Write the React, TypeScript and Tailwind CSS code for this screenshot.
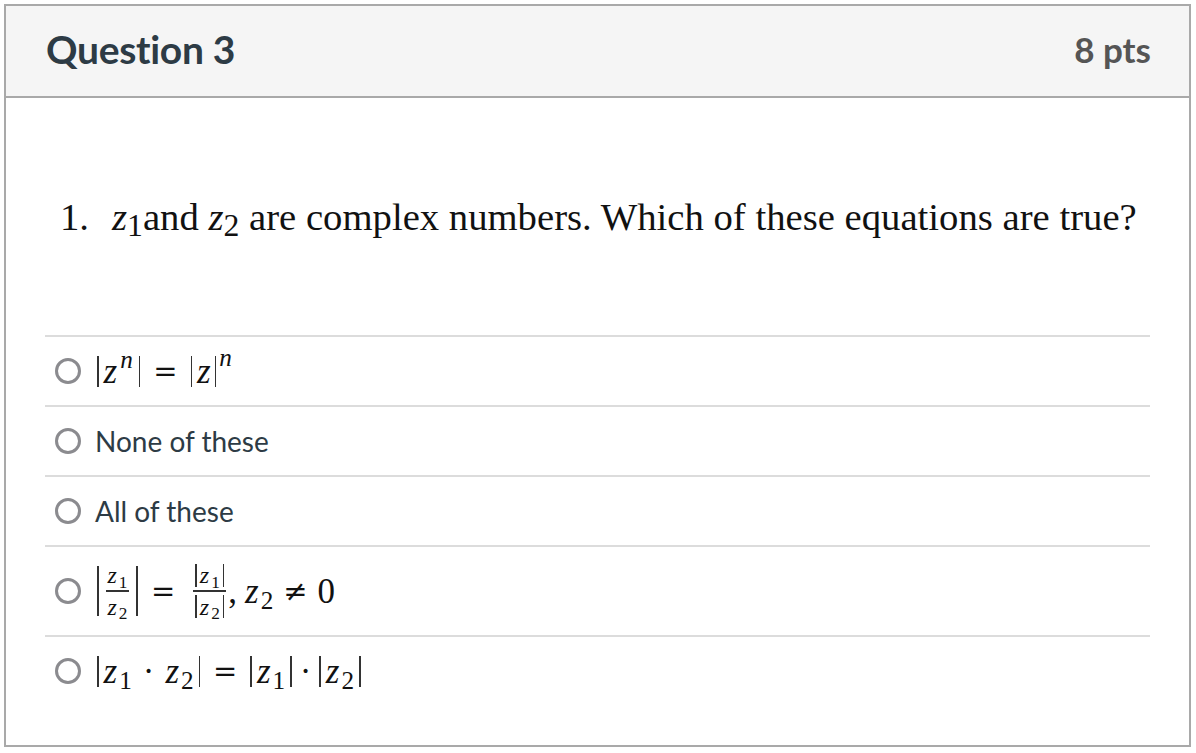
import React from "react";

const serif = { fontFamily: '"Liberation Serif", "Times New Roman", serif' };
const dejavu = { fontFamily: '"DejaVu Serif", serif' };

function Radio() {
  return (
    <span className="inline-block w-[26px] h-[26px] rounded-full border-[3px] border-[#8b8b8f] bg-white shrink-0" />
  );
}

function Bar({ h = "h-[31px]", m = "mx-[3px]" }: { h?: string; m?: string }) {
  return <span className={`inline-block w-[1.5px] bg-[#333] ${h} ${m}`} />;
}

function Z({ sub }: { sub?: string }) {
  return (
    <span className="inline-flex items-baseline">
      <span className="italic">z</span>
      {sub && <span className="text-[0.72em] relative top-[0.25em] ml-[2px]">{sub}</span>}
    </span>
  );
}

function Eq({ c = "=", m = "mx-[13px]" }: { c?: string; m?: string }) {
  return (
    <span className={`${m} text-[29px]`} style={dejavu}>
      {c}
    </span>
  );
}

function Row({ children, tall }: { children: React.ReactNode; tall?: boolean }) {
  return (
    <div className={`flex items-center gap-[14px] pl-[10px] border-t-2 border-[#dcdcdc] ${tall ? "h-[90px]" : "h-[70px]"}`}>
      <Radio />
      <div className="flex items-center">{children}</div>
    </div>
  );
}

function MathText({ children }: { children: React.ReactNode }) {
  return (
    <span className="flex items-center text-[35px] text-[#111] leading-none" style={serif}>
      {children}
    </span>
  );
}

function Frac({ num, den }: { num: React.ReactNode; den: React.ReactNode }) {
  return (
    <span className="inline-flex flex-col items-center mx-[5px]">
      <span className="flex items-center px-[2px]">{num}</span>
      <span className="w-full h-[1.5px] bg-[#333] my-[3px]" />
      <span className="flex items-center px-[2px]">{den}</span>
    </span>
  );
}

export default function App() {
  return (
    <div className="w-[1196px] h-[753px] bg-white pl-[4px] pt-[4px]">
      <div className="w-[1187px] h-[743px] border-2 border-[#a9a9a9] flex flex-col">
        <div className="h-[92px] bg-[#f5f5f5] border-b-2 border-[#a9a9a9] flex items-center justify-between pl-[40px] pr-[38px] pb-[4px]" style={{ fontFamily: 'Lato, "Open Sans", sans-serif' }}>
          <span className="text-[39px] font-bold text-[#2d3b45] tracking-[-0.3px]">Question 3</span>
          <span className="text-[35px] font-bold text-[#555]">8 pts</span>
        </div>
        <div className="px-[39px] flex flex-col">
          <div className="h-[237px] flex items-center pl-[15px] pt-[2px] text-[38.7px] text-[#111]" style={serif}>
            <span className="w-[52px]">1.</span>
            <span>
              <span className="italic">z</span>
              <span className="text-[0.82em] relative top-[0.18em]">1</span>and{" "}
              <span className="italic">z</span>
              <span className="text-[0.82em] relative top-[0.18em]">2</span> are complex numbers. Which of these equations are true?
            </span>
          </div>
          <Row>
            <MathText>
              <Bar m="ml-[2px] mr-[5px]" />
              <span className="italic">z</span>
              <span className="italic text-[0.72em] relative -top-[0.45em] ml-[3px]">n</span>
              <Bar m="ml-[6px] mr-[0px]" />
              <Eq />
              <Bar m="ml-[0px] mr-[5px]" />
              <span className="italic">z</span>
              <Bar m="ml-[4px] mr-[3px]" />
              <span className="italic text-[0.72em] relative -top-[0.55em]">n</span>
            </MathText>
          </Row>
          <Row>
            <span className="text-[28px] text-[#2d3b45]" style={{ fontFamily: 'Lato, sans-serif' }}>None of these</span>
          </Row>
          <Row>
            <span className="text-[28px] text-[#2d3b45]" style={{ fontFamily: 'Lato, sans-serif' }}>All of these</span>
          </Row>
          <Row tall>
            <MathText>
              <Bar h="h-[50px]" m="ml-[2px] mr-[2px]" />
              <span className="text-[24px] flex items-center">
                <Frac num={<Z sub="1" />} den={<Z sub="2" />} />
              </span>
              <Bar h="h-[50px]" m="ml-[2px] mr-[0px]" />
              <Eq />
              <span className="text-[24px] flex items-center">
                <Frac
                  num={<><Bar h="h-[23px]" m="mr-[3px]" /><Z sub="1" /><Bar h="h-[23px]" m="ml-[3px]" /></>}
                  den={<><Bar h="h-[23px]" m="mr-[3px]" /><Z sub="2" /><Bar h="h-[23px]" m="ml-[3px]" /></>}
                />
              </span>
              <span className="-ml-[3px]">,</span>
              <span className="ml-[8px]"><Z sub="2" /></span>
              <Eq c="≠" m="mx-[10px]" />
              <span>0</span>
            </MathText>
          </Row>
          <Row>
            <MathText>
              <Bar m="ml-[2px] mr-[5px]" />
              <Z sub="1" />
              <span className="mx-[11px]">·</span>
              <Z sub="2" />
              <Bar m="ml-[5px] mr-[0px]" />
              <Eq />
              <Bar m="ml-[0px] mr-[5px]" />
              <Z sub="1" />
              <Bar m="ml-[5px] mr-[3px]" />
              <span className="mx-[5px]">·</span>
              <Bar m="ml-[3px] mr-[5px]" />
              <Z sub="2" />
              <Bar m="ml-[5px] mr-[3px]" />
            </MathText>
          </Row>
        </div>
      </div>
    </div>
  );
}
